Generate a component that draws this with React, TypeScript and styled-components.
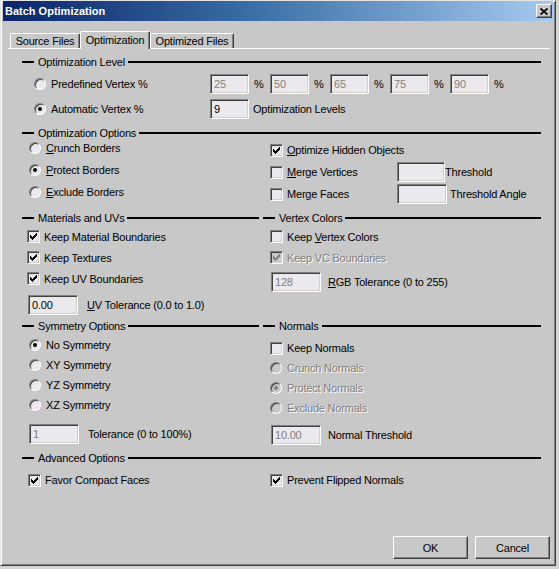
import React from "react";
import styled, { createGlobalStyle } from "styled-components";

const GlobalStyle = createGlobalStyle`
  html, body { margin: 0; padding: 0; }
  body {
    background: #d4d4d4;
    font-family: "Liberation Sans", Arial, sans-serif;
    font-size: 11px;
    letter-spacing: -0.2px;
    color: #000;
  }
`;

const Window = styled.div`
  box-sizing: border-box;
  width: 556px;
  height: 566px;
  display: flex;
  flex-direction: column;
  background: #c8c8c8;
  border: 1px solid;
  border-color: #e4e4e4 #404040 #404040 #e4e4e4;
  box-shadow: inset 1px 1px 0 #fff, inset -1px -1px 0 #808080;
  padding: 0 2px 2px 2px;
`;

const TitleBar = styled.div`
  height: 20px;
  display: flex;
  align-items: center;
  justify-content: space-between;
  padding: 0 1px 0 2px;
  background: linear-gradient(90deg, #0a246a 0%, #3a6ea5 45%, #a6caf0 100%);
  color: #fff;
  font-weight: bold;
  letter-spacing: 0;
`;

const CloseButton = styled.div`
  box-sizing: border-box;
  width: 16px;
  height: 14px;
  background: #c8c8c8;
  border: 1px solid;
  border-color: #fff #404040 #404040 #fff;
  box-shadow: inset -1px -1px 0 #808080;
  display: flex;
  align-items: center;
  justify-content: center;
`;

const TabStrip = styled.div`
  margin-top: 10px;
  height: 17px;
  padding-left: 7px;
  display: flex;
  align-items: flex-end;
`;

const Tab = styled.div<{ $w: number; $active?: boolean }>`
  box-sizing: border-box;
  width: ${(p) => p.$w}px;
  height: ${(p) => (p.$active ? 18 : 15)}px;
  margin-bottom: ${(p) => (p.$active ? -1 : 0)}px;
  position: relative;
  z-index: ${(p) => (p.$active ? 1 : 0)};
  background: #c8c8c8;
  border: 1px solid;
  border-bottom: none;
  border-color: #fff #404040 transparent #fff;
  border-radius: 2px 2px 0 0;
  box-shadow: inset -1px 0 0 #808080;
  display: flex;
  align-items: center;
  justify-content: center;
  padding-bottom: ${(p) => (p.$active ? 1 : 0)}px;
`;

const Panel = styled.div`
  flex: 1;
  margin: 0 3px 0 5px;
  border-top: 1px solid #fff;
  padding: 6px 9px 0 14px;
`;

const Section = styled.div<{ $mt: number }>`
  display: grid;
  grid-template-columns: 237px 278px;
  column-gap: 4px;
  align-items: start;
  margin-top: ${(p) => p.$mt}px;
`;

const GroupHeader = styled.div<{ $full?: boolean }>`
  grid-column: ${(p) => (p.$full ? "1 / -1" : "auto")};
  height: 14px;
  display: flex;
  align-items: center;
  white-space: nowrap;

  &::before {
    content: "";
    width: 12px;
    height: 2px;
    background: #000;
    margin-right: 4px;
  }

  &::after {
    content: "";
    flex: 1;
    height: 2px;
    background: #000;
    margin-left: 3px;
  }
`;

const Column = styled.div<{ $pl: number; $mt: number; $full?: boolean }>`
  grid-column: ${(p) => (p.$full ? "1 / -1" : "auto")};
  display: flex;
  flex-direction: column;
  padding-left: ${(p) => p.$pl}px;
  margin-top: ${(p) => p.$mt}px;
`;

const Row = styled.div<{ $h: number; $mt?: number; $pl?: number }>`
  height: ${(p) => p.$h}px;
  margin-top: ${(p) => p.$mt ?? 0}px;
  padding-left: ${(p) => p.$pl ?? 0}px;
  display: flex;
  align-items: center;
  white-space: nowrap;
`;

const Option = styled.div<{ $gap: number; $w?: number }>`
  display: flex;
  align-items: center;
  gap: ${(p) => p.$gap}px;
  width: ${(p) => (p.$w ? `${p.$w}px` : "auto")};
  flex: none;
`;

const Text = styled.span<{ $off?: boolean; $ml?: number }>`
  color: ${(p) => (p.$off ? "#808080" : "#000")};
  text-shadow: ${(p) => (p.$off ? "1px 1px 0 #fff" : "none")};
  margin-left: ${(p) => p.$ml ?? 0}px;
`;

const RadioCircle = styled.span<{ $on?: boolean; $off?: boolean }>`
  box-sizing: border-box;
  width: 12px;
  height: 12px;
  flex: none;
  border-radius: 50%;
  border: 1px solid;
  border-color: #808080 #fff #fff #808080;
  background: ${(p) => (p.$off ? "#c8c8c8" : "#ebe9ed")};
  box-shadow: inset 1px 1px 0 #404040;
  display: flex;
  align-items: center;
  justify-content: center;

  &::after {
    content: "";
    width: 4px;
    height: 4px;
    border-radius: 50%;
    background: ${(p) => (p.$on ? (p.$off ? "#808080" : "#000") : "transparent")};
  }
`;

const CheckBox = styled.span<{ $off?: boolean }>`
  box-sizing: border-box;
  width: 13px;
  height: 13px;
  flex: none;
  border: 1px solid;
  border-color: #808080 #fff #fff #808080;
  box-shadow: inset 1px 1px 0 #404040, inset -1px -1px 0 #d4d0c8;
  background: ${(p) => (p.$off ? "#c8c8c8" : "#ebe9ed")};
  display: flex;
  align-items: center;
  justify-content: center;
`;

const Field = styled.div<{ $w: number; $off?: boolean }>`
  box-sizing: border-box;
  width: ${(p) => p.$w}px;
  height: 20px;
  flex: none;
  border: 1px solid;
  border-color: #808080 #fff #fff #808080;
  box-shadow: inset 1px 1px 0 #404040, inset -1px -1px 0 #d4d0c8;
  background: #ebe9ed;
  color: ${(p) => (p.$off ? "#808080" : "#000")};
  padding-left: 3px;
  display: flex;
  align-items: center;
`;

const PctGroup = styled.div`
  width: 60px;
  flex: none;
  display: flex;
  align-items: center;
  gap: 5px;
`;

const Footer = styled.div`
  display: flex;
  justify-content: flex-end;
  gap: 7px;
  padding: 0 3px 4px 0;
`;

const DialogButton = styled.div`
  box-sizing: border-box;
  width: 75px;
  height: 23px;
  border: 1px solid;
  border-color: #fff #404040 #404040 #fff;
  box-shadow: inset -1px -1px 0 #808080;
  display: flex;
  align-items: center;
  justify-content: center;
`;

type OptProps = { on?: boolean; off?: boolean; w?: number; children: React.ReactNode };

const Radio = ({ on, off, w, children }: OptProps) => (
  <Option $gap={5} $w={w}>
    <RadioCircle $on={on} $off={off} />
    <Text $off={off}>{children}</Text>
  </Option>
);

const Check = ({ on, off, w, children }: OptProps) => (
  <Option $gap={4} $w={w}>
    <CheckBox $off={off}>
      {on && (
        <svg width="7" height="7" viewBox="0 0 7 7" shapeRendering="crispEdges">
          <path
            d="M6 0h1v3h-1v1h-1v1h-1v1h-1v1h-1v-1h-1v-1h-1v-3h1v1h1v1h1v-1h1v-1h1z"
            fill={off ? "#808080" : "#000"}
          />
        </svg>
      )}
    </CheckBox>
    <Text $off={off}>{children}</Text>
  </Option>
);

const percents = ["25", "50", "65", "75", "90"];

export default function App() {
  return (
    <>
      <GlobalStyle />
      <Window>
        <TitleBar>
          <span>Batch Optimization</span>
          <CloseButton>
            <svg width="8" height="7" viewBox="0 0 8 7">
              <path d="M0.5 0.5 L7.5 6.5 M7.5 0.5 L0.5 6.5" stroke="#000" strokeWidth="1.8" />
            </svg>
          </CloseButton>
        </TitleBar>

        <TabStrip>
          <Tab $w={70}>Source Files</Tab>
          <Tab $w={70} $active>
            Optimization
          </Tab>
          <Tab $w={84}>Optimized Files</Tab>
        </TabStrip>

        <Panel>
          <Section $mt={0}>
            <GroupHeader $full>Optimization Level</GroupHeader>
            <Column $full $pl={12} $mt={2}>
              <Row $h={25}>
                <Radio w={176}>Predefined Vertex %</Radio>
                {percents.map((v) => (
                  <PctGroup key={v}>
                    <Field $w={39} $off>
                      {v}
                    </Field>
                    <span>%</span>
                  </PctGroup>
                ))}
              </Row>
              <Row $h={25}>
                <Radio on w={176}>
                  Automatic Vertex %
                </Radio>
                <Field $w={39}>9</Field>
                <Text $ml={4}>Optimization Levels</Text>
              </Row>
            </Column>
          </Section>

          <Section $mt={5}>
            <GroupHeader $full>Optimization Options</GroupHeader>
            <Column $pl={7} $mt={-2}>
              <Row $h={20}>
                <Radio>
                  <u>C</u>runch Borders
                </Radio>
              </Row>
              <Row $h={20} $mt={2}>
                <Radio on>
                  <u>P</u>rotect Borders
                </Radio>
              </Row>
              <Row $h={20} $mt={2}>
                <Radio>
                  <u>E</u>xclude Borders
                </Radio>
              </Row>
            </Column>
            <Column $pl={7} $mt={0}>
              <Row $h={20}>
                <Check on>
                  <u>O</u>ptimize Hidden Objects
                </Check>
              </Row>
              <Row $h={20} $mt={2}>
                <Check w={127}>
                  <u>M</u>erge Vertices
                </Check>
                <Field $w={48} />
                <span>Threshold</span>
              </Row>
              <Row $h={20} $mt={2}>
                <Check w={127}>
                  Mer<u>g</u>e Faces
                </Check>
                <Field $w={50} />
                <Text $ml={3}>Threshold Angle</Text>
              </Row>
            </Column>
          </Section>

          <Section $mt={7}>
            <GroupHeader>Materials and UVs</GroupHeader>
            <GroupHeader>Vertex Colors</GroupHeader>
            <Column $pl={5} $mt={1}>
              <Row $h={21}>
                <Check on>Keep Material Boundaries</Check>
              </Row>
              <Row $h={21}>
                <Check on>Keep Textures</Check>
              </Row>
              <Row $h={21}>
                <Check on>Keep UV Boundaries</Check>
              </Row>
              <Row $h={20} $mt={6} $pl={1}>
                <Field $w={50}>0.00</Field>
                <Text $ml={9}>
                  <u>U</u>V Tolerance (0.0 to 1.0)
                </Text>
              </Row>
            </Column>
            <Column $pl={7} $mt={1}>
              <Row $h={21}>
                <Check>
                  Keep <u>V</u>ertex Colors
                </Check>
              </Row>
              <Row $h={21}>
                <Check on off>
                  Keep VC Boundaries
                </Check>
              </Row>
              <Row $h={20} $mt={4} $pl={1}>
                <Field $w={50} $off>
                  128
                </Field>
                <Text $ml={7}>
                  <u>R</u>GB Tolerance (0 to 255)
                </Text>
              </Row>
            </Column>
          </Section>

          <Section $mt={4}>
            <GroupHeader>Symmetry Options</GroupHeader>
            <GroupHeader>Normals</GroupHeader>
            <Column $pl={7} $mt={2}>
              <Row $h={20}>
                <Radio on>No Symmetry</Radio>
              </Row>
              <Row $h={20}>
                <Radio>XY Symmetry</Radio>
              </Row>
              <Row $h={20}>
                <Radio>YZ Symmetry</Radio>
              </Row>
              <Row $h={20}>
                <Radio>XZ Symmetry</Radio>
              </Row>
              <Row $h={20} $mt={9} $pl={-1}>
                <Field $w={50} $off>
                  1
                </Field>
                <Text $ml={9}>Tolerance (0 to 100%)</Text>
              </Row>
            </Column>
            <Column $pl={7} $mt={5}>
              <Row $h={20}>
                <Check>Keep Normals</Check>
              </Row>
              <Row $h={20}>
                <Radio off>Crunch Normals</Radio>
              </Row>
              <Row $h={20}>
                <Radio on off>
                  Protect Normals
                </Radio>
              </Row>
              <Row $h={20}>
                <Radio off>Exclude Normals</Radio>
              </Row>
              <Row $h={20} $mt={7} $pl={1}>
                <Field $w={50} $off>
                  10.00
                </Field>
                <Text $ml={7}>Normal Threshold</Text>
              </Row>
            </Column>
          </Section>

          <Section $mt={6}>
            <GroupHeader $full>Advanced Options</GroupHeader>
            <Column $pl={6} $mt={5}>
              <Row $h={20}>
                <Check on>Favor Compact Faces</Check>
              </Row>
            </Column>
            <Column $pl={7} $mt={5}>
              <Row $h={20}>
                <Check on>Prevent Flipped Normals</Check>
              </Row>
            </Column>
          </Section>
        </Panel>

        <Footer>
          <DialogButton>OK</DialogButton>
          <DialogButton>Cancel</DialogButton>
        </Footer>
      </Window>
    </>
  );
}
